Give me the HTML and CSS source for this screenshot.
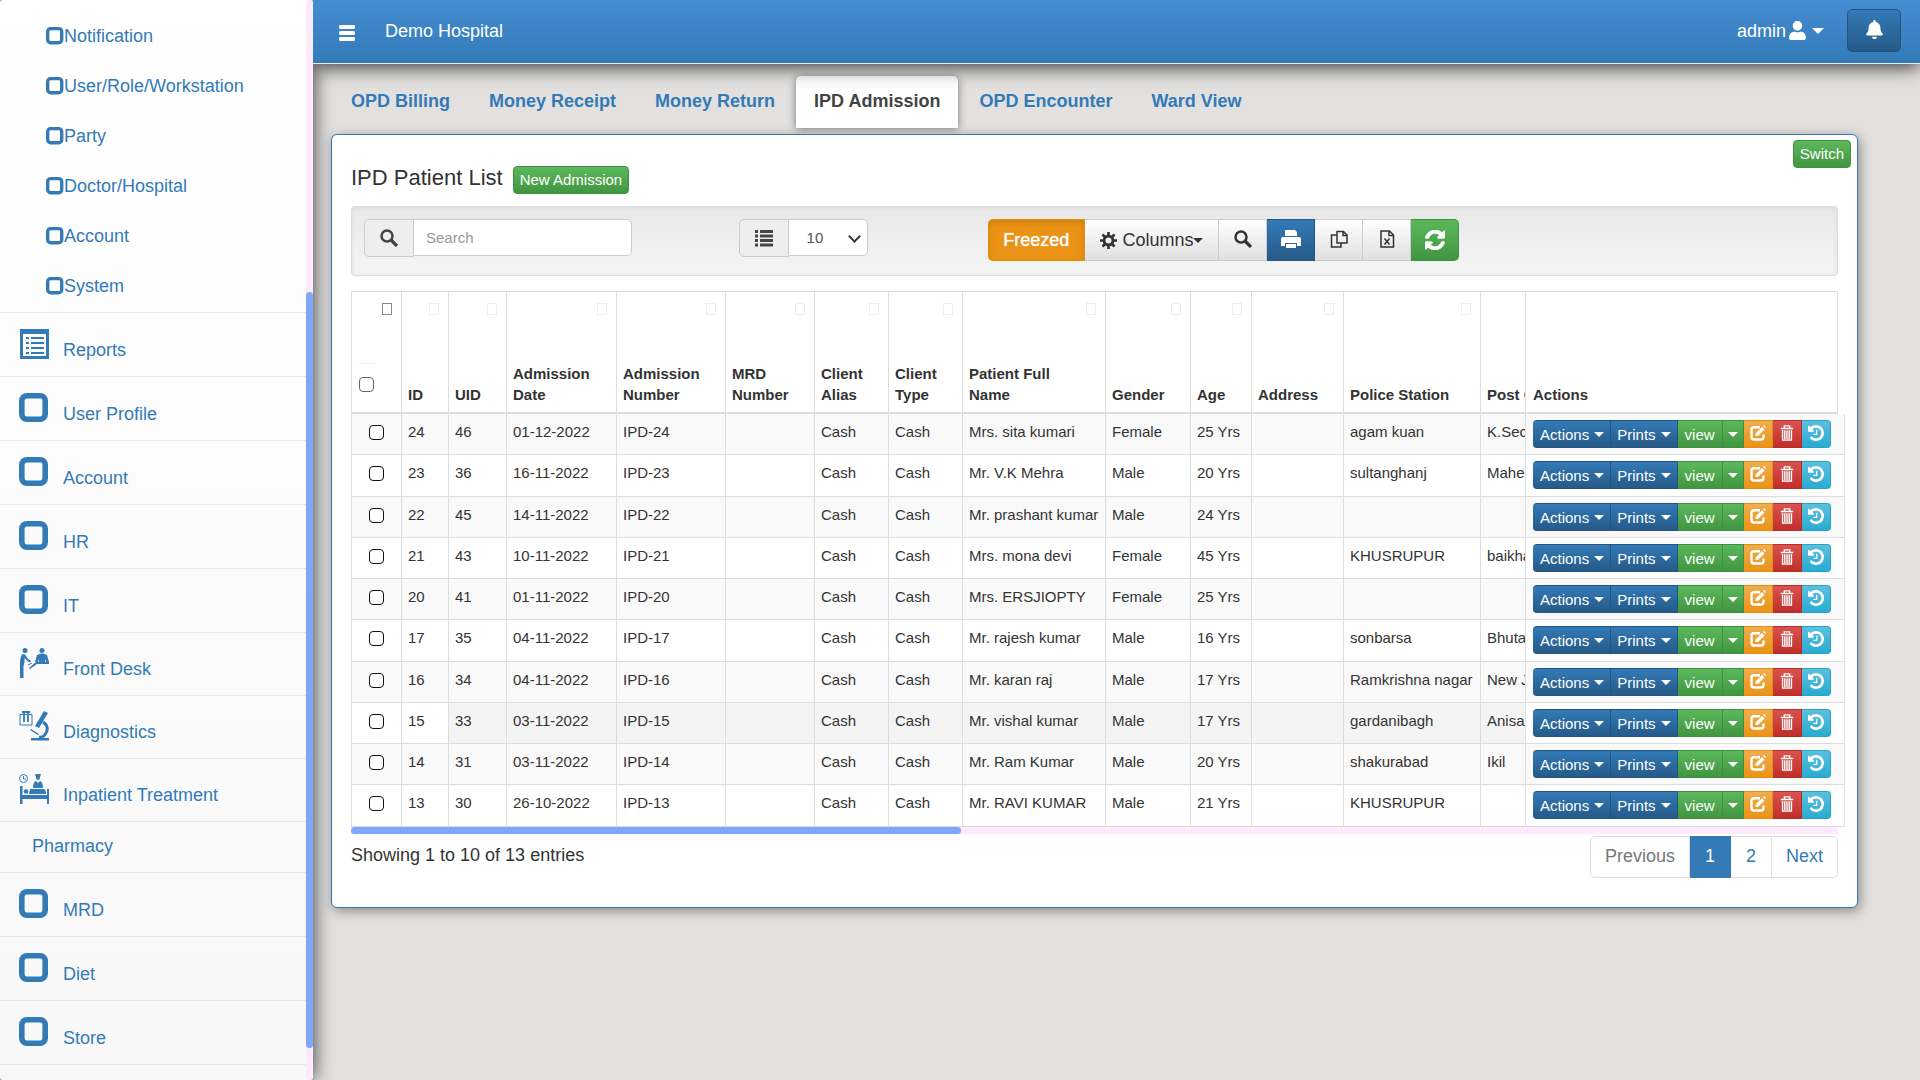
FILE: index.html
```html
<!DOCTYPE html>
<html lang="en">
<head>
  <meta charset="UTF-8">
  <meta name="viewport" content="width=device-width,initial-scale=1.0">
  <title>Demo Hospital</title>
  <link rel="stylesheet" href="styles.css">
</head>
<body>
  <!-- icon sprite -->
  <svg class="sprite" aria-hidden="true">
    <symbol id="i-box" viewBox="0 0 30 30"><rect x="2.8" y="2.8" width="23.400" height="23.400" rx="5" fill="none" stroke="currentColor" stroke-width="5.600"/></symbol>
    <symbol id="i-reports" viewBox="0 0 30 30">
      <path fill-rule="evenodd" d="M1 0h29v30H1zM4 5v22h23V5z"/>
      <path d="M7 8h3v2H7zM12 8h13v2H12zM7 13h3v2H7zM12 13h13v2H12zM7 18h3v2H7zM12 18h13v2H12zM7 23h3v2H7zM12 23h13v2H12z"/>
    </symbol>
    <symbol id="i-desk" viewBox="0 0 30 30">
      <circle cx="6" cy="2.500" r="2.500"/><circle cx="23" cy="2.500" r="2.500"/>
      <path d="M4 6c-2 1-3 5-3 9v15h3.500V18l1-4V10l4 4h2.500l-1-2-2-1-3-4.500z"/>
      <path d="M16 14l2-7q5-3 10 0l2 7h-3l-1-3v3h-6v-3l-1 3z"/>
      <path d="M30 14v2H18l-7 5-1-1 7-6z"/>
      <path d="M9 17l4-2" stroke="currentColor"/>
    </symbol>
    <symbol id="i-scope" viewBox="0 0 30 30">
      <path d="M1 3.500h3M6 3.500h2M10 3.500h3V14H1V3" fill="none" stroke="currentColor"/>
      <path d="M5 0v11M9 0v11M3 1h8" fill="none" stroke="currentColor" stroke-width="1.800"/>
      <path d="M25 0l4 2-9 15-4-2z"/>
      <path d="M24 11q6 4 3.500 10T20 26" fill="none" stroke="currentColor" stroke-width="3"/>
      <path d="M12 18l8 5-1 1-8-5zM12 27h18v2.500H12z"/>
    </symbol>
    <symbol id="i-bed" viewBox="0 0 30 30">
      <circle cx="4.500" cy="4.500" r="4" fill="none" stroke="currentColor"/><path d="M4.500 2v3H7" fill="none" stroke="currentColor"/>
      <path d="M16 0h6l-1 3q0 3-2 3t-2-3zM14 14q0-6 3-7l2 2 2-2q3 1 3 7z"/>
      <path d="M1 12h2.500v9H28v-6h2v15h-2v-5H3.500v5H1z"/>
      <path d="M11 15h14q2 1 2 5H10z"/><circle cx="7" cy="17.500" r="2.300"/>
    </symbol>
    <symbol id="i-menu" viewBox="0 0 16 16"><path d="M1 0h14q1 0 1 2t-1 2H1Q0 4 0 2t1-2zM1 6h14q1 0 1 2t-1 2H1Q0 10 0 8t1-2zM1 12h14q1 0 1 2t-1 2H1q-1 0-1-2t1-2z"/></symbol>
    <symbol id="i-user" viewBox="0 0 448 512"><path d="M224 256c70.700 0 128-57.300 128-128S294.700 0 224 0 96 57.300 96 128s57.300 128 128 128zm89.600 32h-16.700c-22.200 10.200-46.900 16-72.900 16s-50.600-5.800-72.900-16h-16.700C60.200 288 0 348.200 0 422.400V464c0 26.500 21.500 48 48 48h352c26.500 0 48-21.500 48-48v-41.600c0-74.200-60.200-134.400-134.400-134.400z"/></symbol>
    <symbol id="i-bell" viewBox="0 0 448 512"><path d="M224 512c35.320 0 63.970-28.650 63.970-64H160.030c0 35.350 28.650 64 63.970 64zm215.390-149.710c-19.320-20.760-55.470-51.990-55.470-154.290 0-77.700-54.480-139.900-127.940-155.160V32c0-17.670-14.320-32-31.980-32s-31.980 14.330-31.980 32v20.840C118.560 68.100 64.080 130.300 64.080 208c0 102.300-36.150 133.530-55.470 154.290-6 6.450-8.660 14.160-8.610 21.710.11 16.400 12.980 32 32.100 32h383.800c19.120 0 32-15.600 32.100-32 .05-7.550-2.610-15.270-8.610-21.710z"/></symbol>
    <symbol id="i-search" viewBox="0 0 18 18"><circle cx="7" cy="7" r="5.500" fill="none" stroke="currentColor" stroke-width="2.500"/><path d="M11 11l6 6" stroke="currentColor" stroke-width="3.200"/></symbol>
    <symbol id="i-list" viewBox="0 0 18 18"><path d="M0 1h3v3H0zM5 1h13v3H5zM0 5.500h3v3H0zM5 5.500h13v3H5zM0 10h3v3H0zM5 10h13v3H5zM0 14.500h3v3H0zM5 14.500h13v3H5z"/></symbol>
    <symbol id="i-cog" viewBox="0 0 18 18"><circle cx="9" cy="9" r="4.700" fill="none" stroke="currentColor" stroke-width="3"/><path d="M9 0v4M9 14v4M0 9h4M14 9h4M2.600 2.600l3 3M12.400 12.400l3 3M2.600 15.400l3-3M12.400 5.600l3-3" stroke="currentColor" stroke-width="2.800"/></symbol>
    <symbol id="i-print" viewBox="0 0 20 20"><path d="M4 7V2q0-1 1-1h9l2 2v4zM0 17V10q0-2 2-2h16q2 0 2 2v7h-4v-3H4v3z"/><path d="M5 15h10v4H5z"/></symbol>
    <symbol id="i-copy" viewBox="0 0 18 18"><path d="M7 1.500h6.500L17 5v8H7zM13 1.500V5.500h4M7 5H1.500v12H11v-4" fill="none" stroke="currentColor" stroke-width="1.500"/></symbol>
    <symbol id="i-excel" viewBox="0 0 18 18"><path d="M3 1h8.500L15.500 5v12H3zM11 1v4.500h4.500" fill="none" stroke="currentColor" stroke-width="1.500"/><path d="M6.500 8.500l5 6M11.500 8.500l-5 6" stroke="currentColor" stroke-width="1.500"/></symbol>
    <symbol id="i-refresh" viewBox="0 128 1536 1536"><path stroke="currentColor" stroke-width="60" d="M1511 1056q0 5-1 7-64 268-268 434.500t-478 166.500q-146 0-282.500-55t-243.500-157l-129 129q-19 19-45 19t-45-19-19-45v-448q0-26 19-45t45-19h448q26 0 45 19t19 45-19 45l-137 137q71 66 161 102t187 36q134 0 250-65t186-179q11-17 53-117 8-23 30-23h192q13 0 22.500 9.500t9.500 22.500zm25-800v448q0 26-19 45t-45 19h-448q-26 0-45-19t-19-45 19-45l138-138q-148-137-349-137-134 0-250 65t-186 179q-11 17-53 117-8 23-30 23h-199q-13 0-22.500-9.500t-9.500-22.500v-7q65-268 270-434.500t480-166.500q146 0 284 55.500t245 156.500l130-129q19-19 45-19t45 19 19 45z"/></symbol>
    <symbol id="i-edit" viewBox="0 0 16 16"><path d="M10 2.200H4Q1.500 2.200 1.500 4.500v7.500q0 2.500 2.500 2.500h7q2.500 0 2.500-2.500V9.500" fill="none" stroke="currentColor" stroke-width="2.400"/><path d="M5.500 11V8.500L12 2l2.500 2.500L8 11zM13 1l1-1 2 2-1 1z"/></symbol>
    <symbol id="i-trash" viewBox="0 0 16 18"><path d="M1 4h14M5 3.500V1h6v2.500M3 5.500V17h10V5.500M5.500 6v10M8 6v10M10.500 6v10" fill="none" stroke="currentColor" stroke-width="1.600"/></symbol>
    <symbol id="i-history" viewBox="0 128 1536 1536"><path d="M1536 896q0 156-61 298t-164 245-245 164-298 61q-172 0-327-72.500t-264-204.500q-7-10-6.500-22.500t8.500-20.500l137-138q10-9 25-9 16 2 23 12 73 95 179 147t225 52q104 0 198.500-40.500t163.500-109.500 109.500-163.500 40.500-198.500-40.500-198.500-109.500-163.500-163.500-109.500-198.500-40.500q-98 0-188 35.500t-160 101.500l137 138q31 30 14 69-17 40-59 40h-448q-26 0-45-19t-19-45v-448q0-42 40-59 39-17 69 14l130 129q107-101 244.500-156.500t284.500-55.500q156 0 298 61t245 164 164 245 61 298zm-640-288v448q0 14-9 23t-23 9h-320q-14 0-23-9t-9-23v-64q0-14 9-23t23-9h224v-352q0-14 9-23t23-9h64q14 0 23 9t9 23z"/></symbol>
  </svg>

  <aside class="sidebar">
    <nav class="side-nav">
      <ul class="sub-menu">
        <li><a href="#"><svg><use href="#i-box"/></svg>Notification</a></li>
        <li><a href="#"><svg><use href="#i-box"/></svg>User/Role/Workstation</a></li>
        <li><a href="#"><svg><use href="#i-box"/></svg>Party</a></li>
        <li><a href="#"><svg><use href="#i-box"/></svg>Doctor/Hospital</a></li>
        <li><a href="#"><svg><use href="#i-box"/></svg>Account</a></li>
        <li><a href="#"><svg><use href="#i-box"/></svg>System</a></li>
      </ul>
      <ul class="side-menu">
        <li><a href="#"><svg><use href="#i-reports"/></svg>Reports</a></li>
        <li><a href="#"><svg><use href="#i-box"/></svg>User Profile</a></li>
        <li><a href="#"><svg><use href="#i-box"/></svg>Account</a></li>
        <li><a href="#"><svg><use href="#i-box"/></svg>HR</a></li>
        <li><a href="#"><svg><use href="#i-box"/></svg>IT</a></li>
        <li><a class="pic" href="#"><svg><use href="#i-desk"/></svg>Front Desk</a></li>
        <li><a class="pic" href="#"><svg><use href="#i-scope"/></svg>Diagnostics</a></li>
        <li><a class="pic" href="#"><svg><use href="#i-bed"/></svg>Inpatient Treatment</a></li>
        <li><a class="plain" href="#">Pharmacy</a></li>
        <li><a href="#"><svg><use href="#i-box"/></svg>MRD</a></li>
        <li><a href="#"><svg><use href="#i-box"/></svg>Diet</a></li>
        <li><a href="#"><svg><use href="#i-box"/></svg>Store</a></li>
      </ul>
    </nav>
    <div class="side-scroll"><div class="side-thumb"></div></div>
  </aside>

  <div class="page">
    <header class="navbar">
      <button class="nav-toggle" type="button" aria-label="Toggle menu"><svg><use href="#i-menu"/></svg></button>
      <a class="brand" href="#">Demo Hospital</a>
      <a class="account" href="#">admin<svg><use href="#i-user"/></svg><span class="caret"></span></a>
      <button class="btn-bell" type="button" aria-label="Notifications"><svg><use href="#i-bell"/></svg></button>
    </header>

    <main class="content">
      <nav class="tabs">
        <a href="#">OPD Billing</a>
        <a href="#">Money Receipt</a>
        <a href="#">Money Return</a>
        <a class="active" href="#">IPD Admission</a>
        <a href="#">OPD Encounter</a>
        <a href="#">Ward View</a>
      </nav>

      <section class="panel">
        <div class="panel-head">
          <div class="panel-title">
            <h1>IPD Patient List</h1>
            <button class="btn success" type="button">New Admission</button>
          </div>
          <button class="btn success switch" type="button">Switch</button>
        </div>

        <div class="well">
          <div class="input-group">
            <label class="addon" for="search"><svg><use href="#i-search"/></svg></label>
            <input id="search" type="text" placeholder="Search" aria-label="Search">
          </div>
          <div class="input-group">
            <label class="addon" for="length"><svg><use href="#i-list"/></svg></label>
            <div class="select-wrap">
              <select id="length" aria-label="Rows per page"><option>10</option><option>25</option><option>50</option></select>
            </div>
          </div>
          <div class="tools">
            <button class="tool freezed" type="button">Freezed</button>
            <button class="tool" type="button"><svg><use href="#i-cog"/></svg>&nbsp;Columns<span class="caret"></span></button>
            <button class="tool icon" type="button" aria-label="Search columns"><svg><use href="#i-search"/></svg></button>
            <button class="tool icon print" type="button" aria-label="Print"><svg><use href="#i-print"/></svg></button>
            <button class="tool icon" type="button" aria-label="Copy"><svg><use href="#i-copy"/></svg></button>
            <button class="tool icon" type="button" aria-label="Excel"><svg><use href="#i-excel"/></svg></button>
            <button class="tool icon refresh" type="button" aria-label="Refresh"><svg><use href="#i-refresh"/></svg></button>
          </div>
        </div>

        <div class="grid">
          <div class="grid-left">
            <table class="patients">
              <colgroup>
                <col class="c-check"><col class="c-id"><col class="c-uid"><col class="c-date"><col class="c-number">
                <col class="c-mrd"><col class="c-client"><col class="c-client"><col class="c-name"><col class="c-gender">
                <col class="c-age"><col class="c-address"><col class="c-police"><col class="c-post">
              </colgroup>
              <thead>
                <tr>
                  <th class="check sorted"><input type="checkbox" aria-label="Select all"></th>
                  <th>ID</th><th>UID</th><th>Admission Date</th><th>Admission Number</th><th>MRD Number</th>
                  <th>Client Alias</th><th>Client Type</th><th>Patient Full Name</th><th>Gender</th><th>Age</th>
                  <th>Address</th><th>Police Station</th><th>Post O</th>
                </tr>
              </thead>
              <tbody id="rows"></tbody>
            </table>
          </div>
          <!-- fixed right column -->
          <div class="grid-right">
            <table class="fixed-head"><thead><tr><th>Actions</th></tr></thead></table>
            <table class="fixed-body"><tbody id="actions"></tbody></table>
          </div>
        </div>
        <div class="grid-scroll"><div class="grid-thumb"></div></div>

        <div class="panel-foot">
          <div class="info">Showing 1 to 10 of 13 entries</div>
          <nav class="pagination">
            <a class="disabled" href="#">Previous</a><a class="num active" href="#">1</a><a class="num" href="#">2</a><a href="#">Next</a>
          </nav>
        </div>
      </section>
    </main>
  </div>

  <script>
    const patients = [
      [24, 46, '01-12-2022', 'Mrs. sita kumari', 'Female', 25, 'agam kuan', 'K.Sec'],
      [23, 36, '16-11-2022', 'Mr. V.K Mehra', 'Male', 20, 'sultanghanj', 'Mahe'],
      [22, 45, '14-11-2022', 'Mr. prashant kumar', 'Male', 24, '', ''],
      [21, 43, '10-11-2022', 'Mrs. mona devi', 'Female', 45, 'KHUSRUPUR', 'baikha'],
      [20, 41, '01-11-2022', 'Mrs. ERSJIOPTY', 'Female', 25, '', ''],
      [17, 35, '04-11-2022', 'Mr. rajesh kumar', 'Male', 16, 'sonbarsa', 'Bhuta'],
      [16, 34, '04-11-2022', 'Mr. karan raj', 'Male', 17, 'Ramkrishna nagar', 'New J'],
      [15, 33, '03-11-2022', 'Mr. vishal kumar', 'Male', 17, 'gardanibagh', 'Anisa'],
      [14, 31, '03-11-2022', 'Mr. Ram Kumar', 'Male', 20, 'shakurabad', 'Ikil'],
      [13, 30, '26-10-2022', 'Mr. RAVI KUMAR', 'Male', 21, 'KHUSRUPUR', '']
    ];

    const icon = name => `<svg><use href="#i-${name}"/></svg>`;

    document.getElementById('rows').innerHTML = patients.map(([id, uid, date, name, gender, age, police, post]) => `
      <tr${id === 15 ? ' class="hover"' : ''}>
        <td class="check"><input type="checkbox" aria-label="Select ${id}"></td>
        <td>${id}</td><td>${uid}</td><td>${date}</td><td>IPD-${id}</td><td></td>
        <td>Cash</td><td>Cash</td><td>${name}</td><td>${gender}</td><td>${age} Yrs</td>
        <td></td><td>${police}</td><td>${post}</td>
      </tr>`).join('');

    document.getElementById('actions').innerHTML = patients.map(() => `
      <tr><td><div class="btn-group">
        <button type="button" class="primary">Actions <span class="caret"></span></button>
        <button type="button" class="primary">Prints <span class="caret"></span></button>
        <button type="button" class="success">view</button>
        <button type="button" class="success drop" aria-label="More"><span class="caret"></span></button>
        <button type="button" class="warning act" aria-label="Edit">${icon('edit')}</button>
        <button type="button" class="danger act" aria-label="Delete">${icon('trash')}</button>
        <button type="button" class="info-btn act" aria-label="History">${icon('history')}</button>
      </div></td></tr>`).join('');
  </script>
</body>
</html>
```
FILE: styles.css
```css
* {
  box-sizing: border-box;
}
body {
  margin: 0;
  display: flex;
  height: 100vh;
  overflow: hidden;
  background: #e2e1df;
  color: #333;
  font-family: "Liberation Sans", Arial, sans-serif;
  font-size: 18px;
  line-height: 26px;
}
a {
  color: #337ab7;
  text-decoration: none;
}
ul {
  list-style: none;
  margin: 0;
  padding: 0;
}
button, input, select {
  font-family: inherit;
  margin: 0;
}
button {
  cursor: pointer;
}
svg {
  fill: currentColor;
  flex: none;
}
.sprite {
  position: absolute;
  width: 0;
  height: 0;
}
.caret {
  display: inline-block;
  border: 5px solid transparent;
  border-top-color: currentColor;
  border-bottom: 0;
  vertical-align: middle;
}

/* sidebar */
.sidebar {
  display: flex;
  flex: none;
  width: 313px;
  height: 100vh;
  overflow: hidden;
  border-radius: 4px;
  background: linear-gradient(#fff, #f8f8f8);
  box-shadow: 0 0 20px #333;
  z-index: 1;
}
.side-nav {
  flex: 1;
}
.sub-menu {
  padding: 11px 0 1px;
}
.sub-menu a {
  display: flex;
  align-items: center;
  height: 50px;
  padding-left: 46px;
}
.sub-menu svg {
  width: 18px;
  height: 18px;
}
.side-menu a {
  display: flex;
  align-items: flex-end;
  gap: 14px;
  height: 64px;
  padding: 0 0 13px 19px;
  border-top: 1px solid #e7e7e7;
}
.side-menu li:last-child {
  border-bottom: 1px solid #e7e7e7;
}
.side-menu svg {
  width: 30px;
  height: 30px;
  margin-bottom: 4px;
}
.side-menu .pic {
  height: 63px;
}
.side-menu .plain {
  height: 51px;
  padding-left: 32px;
}
.side-scroll {
  width: 7px;
  background: #ffeafd;
}
.side-thumb {
  height: 70vh;
  margin-top: 27vh;
  border-radius: 4px;
  background: #80a6f9;
}

/* top bar */
.page {
  flex: 1;
  min-width: 0;
}
.navbar {
  position: relative;
  z-index: 2;
  display: flex;
  align-items: center;
  height: 64px;
  padding: 0 19px 2px 26px;
  color: #fff;
  background: linear-gradient(#458dd2, #337ab7);
  border-bottom: 1px solid #e3effa;
  box-shadow: 0 3px 18px #333;
  /* keep the shadow off the sidebar */
  clip-path: inset(0 0 -30px 0);
}
.navbar a {
  color: #fff;
}
.nav-toggle {
  display: flex;
  padding: 4px 0 0;
  border: 0;
  background: none;
  color: #fff;
}
.nav-toggle svg {
  width: 16px;
  height: 16px;
}
.brand {
  margin-left: 30px;
}
.account {
  display: flex;
  align-items: center;
  margin-left: auto;
}
.account svg {
  width: 17px;
  height: 19px;
  margin: 0 6px 0 3px;
}
.account .caret {
  border-width: 6px 6px 0;
}
.btn-bell {
  display: flex;
  align-items: center;
  justify-content: center;
  width: 54px;
  height: 43px;
  margin-left: 23px;
  padding: 0 0 3px;
  color: #fff;
  border: 1px solid #245580;
  border-radius: 5px;
  background: linear-gradient(#337ab7, #265a88);
}
.btn-bell svg {
  width: 17px;
  height: 19px;
}

/* tabs + panel */
.content {
  padding: 12px 62px 0 18px;
}
.tabs {
  display: flex;
  gap: 3px;
  margin: 0 0 6px 2px;
  font-weight: bold;
}
.tabs a {
  padding: 12px 18px 14px;
  border-radius: 5px 5px 0 0;
  white-space: nowrap;
}
.tabs .active {
  color: #444;
  background: #fff;
  box-shadow: 0 1px 8px #777;
}
.panel {
  padding: 5px 19px 29px;
  background: #fff;
  border: 1px solid #337ab7;
  border-radius: 6px;
  box-shadow: 2px 3px 12px #888;
}
.panel-head {
  display: flex;
  align-items: flex-start;
  justify-content: space-between;
  margin-bottom: 12px;
}
.panel-title {
  display: flex;
  align-items: center;
  gap: 10px;
  padding-top: 26px;
}
.panel-title h1 {
  margin: 0;
  font-size: 22px;
  font-weight: normal;
  line-height: 24px;
  padding-bottom: 4px;
}
.btn {
  height: 28px;
  padding: 0 6px;
  color: #fff;
  font-size: 15px;
  line-height: 26px;
  border: 1px solid #3e8f3e;
  border-radius: 4px;
}
.switch {
  margin-right: -13px;
}
.success {
  background: linear-gradient(#5cb85c, #419641);
}

/* toolbar */
.well {
  display: grid;
  grid-template-columns: 30fr 20fr 67fr;
  align-items: start;
  padding: 12px 12px 14px;
  border: 1px solid #dcdcdc;
  border-radius: 4px;
  background: linear-gradient(#e8e8e8, #f5f5f5);
  box-shadow: inset 0 1px 4px #ddd;
}
.input-group {
  display: flex;
}
.addon {
  display: flex;
  align-items: center;
  justify-content: center;
  width: 50px;
  height: 38px;
  color: #444;
  background: #eee;
  border: 1px solid #ccc;
  border-radius: 5px 0 0 5px;
}
.addon svg {
  width: 18px;
  height: 18px;
}
.input-group input, .input-group select {
  height: 37px;
  margin-left: -1px;
  color: #555;
  font-size: 15px;
  background: #fff;
  border: 1px solid #ccc;
  border-radius: 0 5px 5px 0;
}
.input-group input {
  width: 219px;
  padding: 0 12px;
}
.input-group input::placeholder {
  color: #999;
}
.select-wrap {
  position: relative;
}
.select-wrap select {
  width: 80px;
  padding: 0 18px;
  appearance: none;
}
.select-wrap::after {
  content: "";
  position: absolute;
  top: 13px;
  right: 9px;
  width: 7px;
  height: 7px;
  border: solid #333;
  border-width: 0 2px 2px 0;
  transform: rotate(45deg);
  pointer-events: none;
}
.tools {
  display: flex;
}
.tool {
  display: flex;
  align-items: center;
  justify-content: center;
  height: 42px;
  padding: 0 15px;
  color: #333;
  font-size: 18px;
  border: 1px solid #ccc;
  border-left: 0;
  background: linear-gradient(#fff, #e0e0e0);
}
.tool svg {
  width: 17px;
  height: 17px;
}
.tool.icon {
  width: 48px;
  padding: 0 0 3px;
}
.tool.icon svg {
  width: 18px;
  height: 18px;
}
.tool.freezed {
  color: #fff;
  text-shadow: 0 0 1px #fff;
  background: #eb9316;
  border-color: #e38d13;
  border-radius: 5px 0 0 5px;
  box-shadow: inset 0 3px 6px #cf8010;
}
.tool.print {
  color: #fff;
  background: linear-gradient(#337ab7, #265a88);
  border-color: #245580;
}
.tool.print svg, .tool.refresh svg {
  width: 20px;
  height: 20px;
}
.tool.refresh {
  color: #fff;
  padding: 0;
  background: linear-gradient(#5cb85c, #419641);
  border-color: #3e8f3e;
  border-radius: 0 5px 5px 0;
}

/* patient table */
.grid {
  display: flex;
  margin-top: 15px;
}
.grid-left {
  flex: 1;
  min-width: 0;
  overflow: hidden;
}
.grid-right {
  width: 313px;
}
table {
  table-layout: fixed;
  border-spacing: 0;
  border-left: 1px solid #ddd;
  font-size: 15px;
  line-height: 21px;
}
.patients {
  width: 1260px;
}
.c-check { width: 50px; }
.c-id { width: 47px; }
.c-uid { width: 58px; }
.c-date { width: 110px; }
.c-number { width: 109px; }
.c-mrd { width: 89px; }
.c-client { width: 74px; }
.c-name { width: 143px; }
.c-gender { width: 85px; }
.c-age { width: 61px; }
.c-address { width: 92px; }
.c-police { width: 137px; }
.c-post { width: 130px; }
.fixed-head {
  width: 313px;
}
.fixed-body {
  width: 320px;
}
th {
  position: relative;
  height: 123px;
  padding: 6px 24px 7px 6px;
  text-align: left;
  vertical-align: bottom;
  border: solid #ddd;
  border-width: 1px 1px 2px 0;
}
/* sort marker */
.patients th::after {
  content: "";
  position: absolute;
  top: 11px;
  right: 9px;
  width: 8px;
  height: 10px;
  border: 1px solid #eee;
}
.patients th.sorted::after {
  border-color: #888;
}
th.check::before {
  content: "";
  position: absolute;
  top: 71px;
  left: 7px;
  width: 16px;
  border-top: 1px solid #eee;
}
td {
  height: 41px;
  padding: 7px 0 0 6px;
  vertical-align: top;
  white-space: nowrap;
  border: solid #ddd;
  border-width: 0 1px 1px 0;
}
tr:nth-child(4n+2) td {
  height: 42px;
}
tr:nth-child(odd) td {
  background: #f9f9f9;
}
tr.hover td:nth-child(n+3) {
  background: #f4f4f4;
}
input[type="checkbox"] {
  display: block;
  appearance: none;
  width: 15px;
  height: 15px;
  background: #fff;
  border: 1px solid #111;
  border-radius: 4px;
}
td.check {
  padding: 11px 0 0 17px;
}
th.check {
  padding: 0 0 20px 7px;
}
th input[type="checkbox"] {
  border-color: #666;
}
.fixed-head th, .fixed-body td {
  padding-left: 7px;
}
.fixed-body td {
  padding-top: 6px;
}
.btn-group {
  display: flex;
}
.btn-group button {
  display: flex;
  align-items: center;
  gap: 5px;
  height: 28px;
  padding: 0 6px;
  color: #fff;
  font-size: 15px;
  border: 1px solid;
  border-left: 0;
}
.btn-group button:first-child {
  padding-left: 7px;
  border-radius: 4px 0 0 4px;
}
.btn-group button:last-child {
  border-radius: 0 4px 4px 0;
}
.btn-group .primary {
  background: linear-gradient(#337ab7, #265a88);
  border-color: #245580;
}
.btn-group .success {
  padding: 0 7px;
  border-color: #3e8f3e;
}
.btn-group .drop {
  padding: 0 5px;
}
.btn-group .act {
  width: 29px;
  justify-content: center;
  padding: 0 0 3px;
}
.btn-group .warning {
  background: linear-gradient(#f0ad4e, #eb9316);
  border-color: #e38d13;
}
.btn-group .danger {
  background: linear-gradient(#d9534f, #c12e2a);
  border-color: #b92c28;
}
.btn-group .info-btn {
  background: linear-gradient(#5bc0de, #2aabd2);
  border-color: #28a4c9;
}
.btn-group svg {
  width: 16px;
  height: 16px;
}
.grid-scroll {
  height: 7px;
  background: #ffeafd;
}
.grid-thumb {
  width: 41%;
  height: 7px;
  border-radius: 4px;
  background: #80a6f9;
}

/* footer */
.panel-foot {
  display: flex;
  justify-content: space-between;
  align-items: flex-start;
  padding-top: 2px;
}
.info {
  padding-top: 6px;
}
.pagination {
  display: flex;
}
.pagination a {
  padding: 6px 14px 8px;
  background: #fff;
  border: 1px solid #ddd;
  border-left: 0;
}
.pagination a:first-child {
  border-left: 1px solid #ddd;
  border-radius: 5px 0 0 5px;
}
.pagination a:last-child {
  border-radius: 0 5px 5px 0;
}
.pagination .num {
  padding: 6px 15px 8px;
}
.pagination .disabled {
  color: #777;
}
.pagination .active {
  color: #fff;
  background: #337ab7;
  border-color: #337ab7;
}
```
